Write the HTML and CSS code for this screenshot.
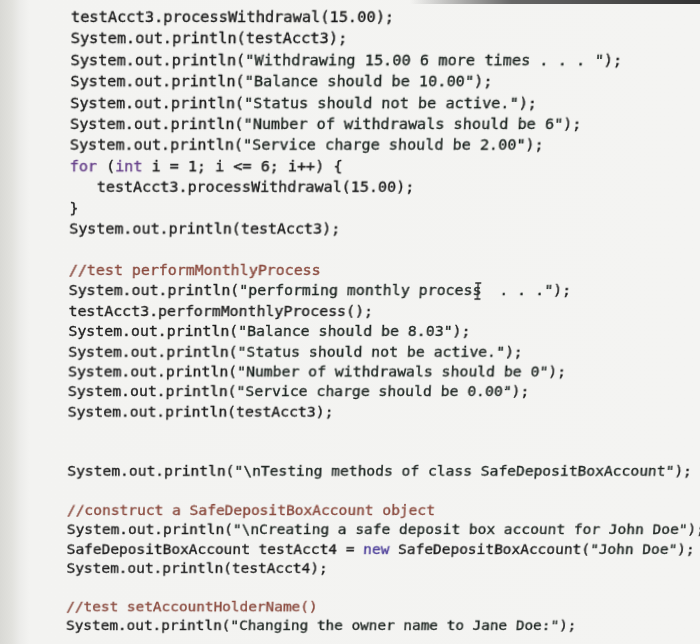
FILE: index.html
```html
<!DOCTYPE html>
<html>
<head>
<meta charset="utf-8">
<link rel="stylesheet" href="styles.css">
</head>
<body>
<div class="screen">
<pre class="code">testAcct3.processWithdrawal(15.00);
System.out.println(testAcct3);
System.out.println(<span class="str">"Withdrawing 15.00 6 more times . . . "</span>);
System.out.println(<span class="str">"Balance should be 10.00"</span>);
System.out.println(<span class="str">"Status should not be active."</span>);
System.out.println(<span class="str">"Number of withdrawals should be 6"</span>);
System.out.println(<span class="str">"Service charge should be 2.00"</span>);
<span class="kw">for</span> (<span class="kw">int</span> i = 1; i &lt;= 6; i++) {
   testAcct3.processWithdrawal(15.00);
}
System.out.println(testAcct3);

<span class="cm">//test performMonthlyProcess</span>
System.out.println(<span class="str">"performing monthly proces<span class="cur">s<svg class="ibeam" width="8" height="18" viewBox="0 0 8 18"><path d="M1 1h6M4 1v16M1 17h6" fill="none" stroke="#2a2a2a" stroke-width="1.3"/></svg></span>  . . ."</span>);
testAcct3.performMonthlyProcess();
System.out.println(<span class="str">"Balance should be 8.03"</span>);
System.out.println(<span class="str">"Status should not be active."</span>);
System.out.println(<span class="str">"Number of withdrawals should be 0"</span>);
System.out.println(<span class="str">"Service charge should be 0.00"</span>);
System.out.println(testAcct3);


System.out.println(<span class="str">"\nTesting methods of class SafeDepositBoxAccount"</span>);

<span class="cm">//construct a SafeDepositBoxAccount object</span>
System.out.println(<span class="str">"\nCreating a safe deposit box account for John Doe"</span>);
SafeDepositBoxAccount testAcct4 = <span class="kw new">new</span> SafeDepositBoxAccount(<span class="str">"John Doe"</span>);
System.out.println(testAcct4);

<span class="cm">//test setAccountHolderName()</span>
System.out.println(<span class="str">"Changing the owner name to Jane Doe:"</span>);</pre>
</div>
</body>
</html>
```
FILE: styles.css
```css
html, body {
  margin: 0;
  padding: 0;
}

body {
  background: #f2f2f0;
}

.screen {
  width: 700px;
  height: 644px;
  overflow: hidden;
  background:
    linear-gradient(to right, rgba(120,120,120,0) 0, rgba(80,80,80,0.85) 35%, rgba(40,40,40,0.95) 100%) right top / 290px 4px no-repeat,
    linear-gradient(to right, #d9d9d5 0, #e2e2de 12px, #ececea 20px, #f3f3f1 30px, #f4f4f2 100%);
}

.code {
  margin: 0;
  padding: 15px 0 0 68.5px;
  font-family: "DejaVu Sans Mono", "Liberation Mono", monospace;
  font-size: 14.85px;
  line-height: 20.4px;
  color: #1a1a1a;
  -webkit-text-stroke: 0.35px currentColor;
  white-space: pre;
  transform-origin: -5px 326.6px;
  transform: perspective(1000px) rotateX(-6.16deg);
}

.str {
  color: #1c2420;
}

.kw {
  color: #643d88;
}

.kw.new {
  color: #4a3c98;
}

.cm {
  color: #8a4a3e;
}

.cur {
  position: relative;
}

.ibeam {
  position: absolute;
  left: 1px;
  top: 1px;
}
```
